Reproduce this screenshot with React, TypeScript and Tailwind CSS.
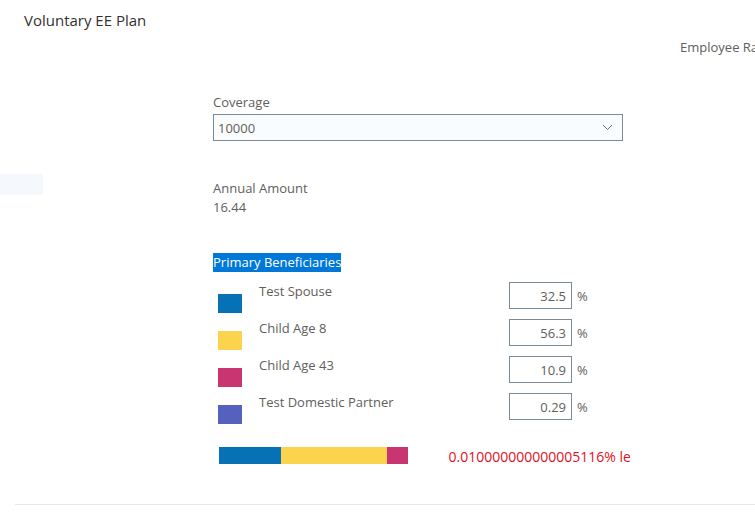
const beneficiaries = [
  { name: "Test Spouse", pct: 32.5, color: "bg-[#0671b5]" },
  { name: "Child Age 8", pct: 56.3, color: "bg-[#fcd34c]" },
  { name: "Child Age 43", pct: 10.9, color: "bg-[#c83570]" },
  { name: "Test Domestic Partner", pct: 0.29, color: "bg-[#5661bd]" },
];

// remainder as the page shows it (float sum, not rounded)
const remaining = "0.010000000000005116";

function Chevron() {
  return (
    <svg width="11" height="7" viewBox="0 0 11 7" className="text-[#6b6f73]">
      <path d="M1 1l4.5 4.5L10 1" fill="none" stroke="currentColor" strokeWidth="1" />
    </svg>
  );
}

export default function App() {
  return (
    <div className="w-[755px] h-[521px] overflow-hidden bg-white text-[13px] leading-[18px] text-[#605e5c] font-['Open_Sans',sans-serif]">
      <div className="pt-[10px] pl-[24px] text-[15px] leading-[20px] text-[#323130]">Voluntary EE Plan</div>
      <div className="mt-[8px] pl-[680px] whitespace-nowrap">Employee Rates</div>

      <div className="flex">
        <div className="w-[43px] shrink-0 pt-[118px]">
          <div className="h-[21px] bg-[#f5f9fd]" />
        </div>

        <div className="ml-[170px] w-[417px] shrink-0">
          <div className="mt-[37px]">Coverage</div>
          <div className="mt-[3px] w-[410px] h-[27px] border border-[#7b8c98] bg-[#f9fbfd] flex items-center justify-between pl-[4px] pr-[9px]">
            <span>10000</span>
            <Chevron />
          </div>

          <div className="mt-[38px]">Annual Amount</div>
          <div className="mt-[1px]">16.44</div>

          <div className="mt-[37px]">
            <span className="inline-block leading-[19px] bg-[#0078d7] text-white">Primary Beneficiaries</span>
          </div>

          <div className="mt-[10px]">
            {beneficiaries.map((b) => (
              <div key={b.name} className="flex items-start h-[37px]">
                <div className="w-[46px] shrink-0 pl-[5px] pt-[12px]">
                  <div className={`w-[24px] h-[19px] ${b.color}`} />
                </div>
                <div className="w-[250px] shrink-0">{b.name}</div>
                <div className="flex items-center">
                  <div className="w-[63px] h-[27px] border border-[#7b8c98] bg-white flex items-center justify-end pr-[5px]">
                    {b.pct}
                  </div>
                  <span className="ml-[5px]">%</span>
                </div>
              </div>
            ))}
          </div>

          <div className="mt-[15px] flex items-center">
            <div className="ml-[6px] w-[190px] h-[17px] flex overflow-hidden">
              {beneficiaries.map((b) => (
                <div key={b.name} className={`h-full ${b.color}`} style={{ width: `${b.pct}%` }} />
              ))}
            </div>
            <div className="ml-[40px] w-[182px] overflow-hidden whitespace-nowrap text-[14px] leading-[19px] text-[#e3101f] mt-[2px]">
              {remaining}% left
            </div>
          </div>
        </div>
      </div>

      <div className="mt-[38px] ml-[15px] border-t border-[#e8e8e8]" />
    </div>
  );
}
